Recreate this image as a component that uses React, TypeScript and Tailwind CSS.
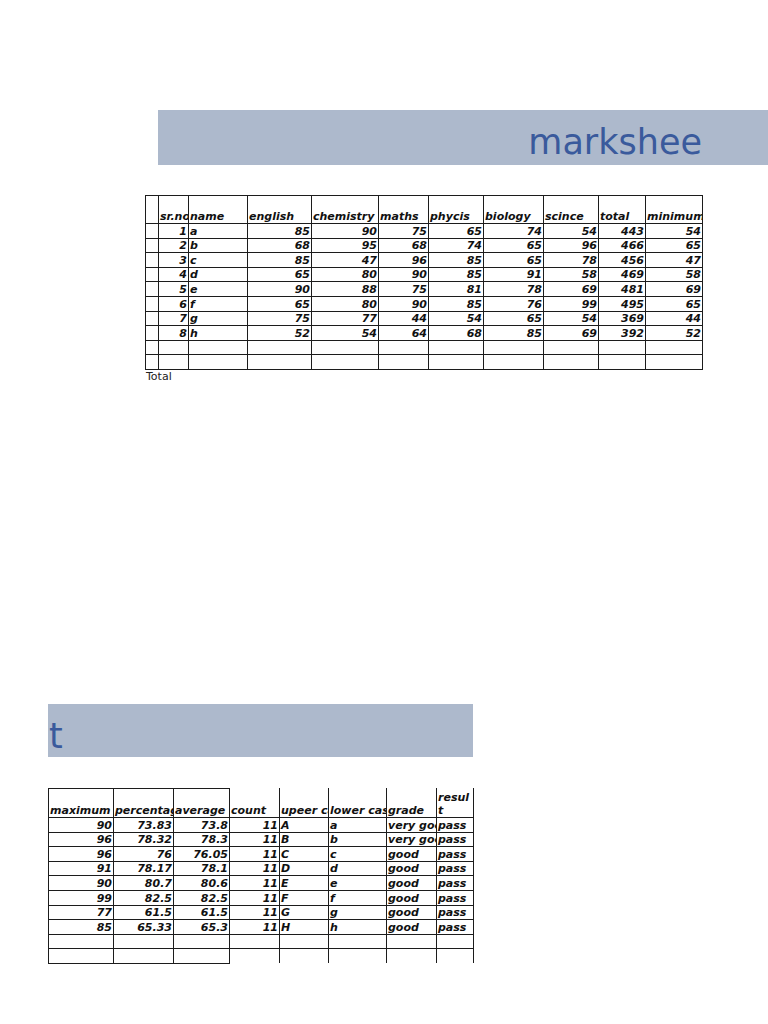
const marks: (string | number)[][] = [
  [1, "a", 85, 90, 75, 65, 74, 54, 443, 54],
  [2, "b", 68, 95, 68, 74, 65, 96, 466, 65],
  [3, "c", 85, 47, 96, 85, 65, 78, 456, 47],
  [4, "d", 65, 80, 90, 85, 91, 58, 469, 58],
  [5, "e", 90, 88, 75, 81, 78, 69, 481, 69],
  [6, "f", 65, 80, 90, 85, 76, 99, 495, 65],
  [7, "g", 75, 77, 44, 54, 65, 54, 369, 44],
  [8, "h", 52, 54, 64, 68, 85, 69, 392, 52],
];

const summary: (string | number)[][] = [
  [90, 73.83, 73.8, 11, "A", "a", "very good", "pass"],
  [96, 78.32, 78.3, 11, "B", "b", "very good", "pass"],
  [96, 76, 76.05, 11, "C", "c", "good", "pass"],
  [91, 78.17, 78.1, 11, "D", "d", "good", "pass"],
  [90, 80.7, 80.6, 11, "E", "e", "good", "pass"],
  [99, 82.5, 82.5, 11, "F", "f", "good", "pass"],
  [77, 61.5, 61.5, 11, "G", "g", "good", "pass"],
  [85, 65.33, 65.3, 11, "H", "h", "good", "pass"],
];

const topCols = [13, 30, 59, 64, 67, 50, 55, 60, 55, 47, 57];
const topHead = ["", "sr.no", "name", "english", "chemistry", "maths", "phycis", "biology", "scince", "total", "minimum"];

const botCols = [65, 60, 56, 50, 49, 58, 50, 37];
const botHead = ["maximum", "percentage", "average", "count", "upeer case", "lower case", "grade", "result"];

const cell = "border border-[#1c1c1c] px-[1px] whitespace-nowrap overflow-hidden align-bottom leading-[13px]";

export default function App() {
  return (
    <div className="w-[768px] min-h-[1024px] bg-white text-[#111] font-['DejaVu_Sans',sans-serif]">
      {/* page 1 */}
      <div className="pt-[110px] pl-[158px]">
        <div className="h-[55px] bg-[#adb9cc] flex items-end justify-end pr-[66px] pb-[1px]">
          <span className="text-[35px] leading-[44px] text-[#3a5a9c]">markshee</span>
        </div>
      </div>

      <div className="ml-[145px] mt-[30px]">
        <table className="border-collapse table-fixed text-[11px] font-bold italic" style={{ width: 557 }}>
          <colgroup>
            {topCols.map((w, i) => (
              <col key={i} style={{ width: w }} />
            ))}
          </colgroup>
          <tbody>
            <tr className="h-[28px]">
              {topHead.map((h, i) => (
                <td key={i} className={`${cell} text-left`}>
                  {h}
                </td>
              ))}
            </tr>
            {marks.map((r, ri) => (
              <tr key={ri} className="h-[14.6px]">
                <td className={cell}></td>
                {r.map((v, i) => (
                  <td key={i} className={`${cell} ${i === 1 ? "text-left" : "text-right"}`}>
                    {v}
                  </td>
                ))}
              </tr>
            ))}
            {[0, 1].map((k) => (
              <tr key={`e${k}`} className="h-[14.6px]">
                {topCols.map((_, i) => (
                  <td key={i} className={cell}></td>
                ))}
              </tr>
            ))}
          </tbody>
        </table>
        <div className="text-[11px] leading-[12px] pl-[1px] pt-[1px] text-[#222]">Total</div>
      </div>

      {/* page 2 */}
      <div className="ml-[48px] mt-[321px] w-[425px] h-[53px] bg-[#adb9cc] flex items-end">
        <span className="text-[35px] leading-[42px] text-[#3a5a9c] pl-[1px]">t</span>
      </div>

      <div className="ml-[48px] mt-[31px]">
        <table className="border-collapse table-fixed text-[11px] font-bold italic" style={{ width: 425 }}>
          <colgroup>
            {botCols.map((w, i) => (
              <col key={i} style={{ width: w }} />
            ))}
          </colgroup>
          <tbody>
            <tr className="h-[29px]">
              {botHead.map((h, i) => (
                <td key={i} className={`${cell} text-left ${i > 2 ? "border-t-0" : ""}`}>
                  {i === 7 ? <div className="w-[32px] whitespace-normal break-all">{h}</div> : h}
                </td>
              ))}
            </tr>
            {summary.map((r, ri) => (
              <tr key={ri} className="h-[14.6px]">
                {r.map((v, i) => (
                  <td key={i} className={`${cell} ${i < 4 ? "text-right" : "text-left"}`}>
                    {v}
                  </td>
                ))}
              </tr>
            ))}
            {[0, 1].map((k) => (
              <tr key={`e${k}`} className="h-[14.6px]">
                {botCols.map((_, i) => (
                  <td key={i} className={`${cell} ${k === 1 && i > 2 ? "border-b-0" : ""}`}></td>
                ))}
              </tr>
            ))}
          </tbody>
        </table>
      </div>
    </div>
  );
}
